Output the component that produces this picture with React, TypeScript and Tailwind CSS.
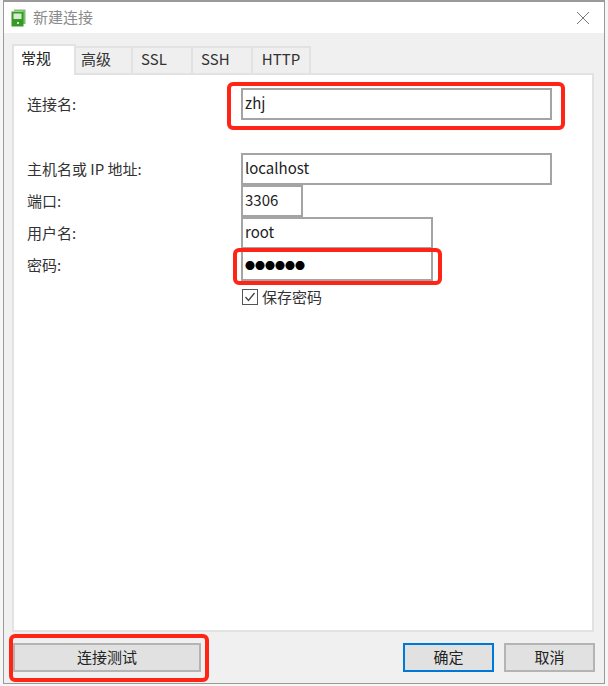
const font = { fontFamily: '"Noto Sans CJK SC", "Noto Sans", sans-serif' };

function Field({ label, value, width, valueClass = "text-[15px] text-[#222] pb-[2px]" }: { label: string; value: string; width: string; valueClass?: string }) {
  return (
    <div className="flex items-center h-[32px]">
      <div className="w-[227px] pl-[13px] text-[15px] text-[#333]">{label}</div>
      <div className={`${width} h-[32px] border-2 border-[#a4a4a4] bg-white flex items-center pl-[2px] ${valueClass}`}>{value}</div>
    </div>
  );
}

function Tab({ label, width, active }: { label: string; width?: string; active?: boolean }) {
  return active ? (
    <div className="w-[64px] h-[31px] -mb-[2px] z-10 bg-white border-2 border-b-0 border-[#e2e2e2] flex items-center justify-center text-[15px] text-[#222] pb-[5px] pr-[16px]">{label}</div>
  ) : (
    <div className={`${width} h-[27px] border-2 border-l-0 border-b-0 border-[#e2e2e2] bg-[#efefef] flex items-center justify-center text-[15px] text-[#333] pb-[2px]`}>{label}</div>
  );
}

export default function App() {
  return (
    <div className="w-[608px] h-[686px] bg-[#f6f6f6] relative overflow-hidden" style={font}>
      <div className="ml-[3px] mr-[3px] h-[684px] bg-[#f0f0f0] border border-[#9a9a9a] border-t-2 flex flex-col">
        <div className="h-[31px] bg-white flex items-center pl-[7px] pr-[14px] shrink-0">
          <svg width="16" height="18" viewBox="0 0 16 18" className="mr-[6px]">
            <path d="M3 0.5 H14.5 V15 H12 V2 H3 Z" fill="#7cc070" />
            <path d="M0.5 2.5 H12.5 V17.5 H0.5 Z" fill="#379a26" />
            <rect x="2.5" y="4.5" width="8" height="5.5" fill="#d5ecd0" />
            <rect x="6" y="13" width="2" height="2" fill="#d5ecd0" />
          </svg>
          <span className="text-[15px] text-[#8b8b8b]">新建连接</span>
          <svg width="14" height="14" viewBox="0 0 14 14" className="ml-auto" stroke="#777" strokeWidth="1" fill="none">
            <path d="M1 1 L13 13 M13 1 L1 13" />
          </svg>
        </div>
        <div className="flex-1 flex flex-col pl-[8px] pr-[10px] pt-[11px]">
          <div className="flex items-end h-[29px] shrink-0">
            <Tab label="常规" active />
            <div className="flex items-end">
              <div className="w-[57px] h-[27px] border-2 border-l-0 border-b-0 border-[#e2e2e2] bg-[#efefef] flex items-center text-[15px] text-[#333] pb-[2px] pl-[5px]">高级</div>
              <div className="w-[60px] h-[27px] border-2 border-l-0 border-b-0 border-[#e2e2e2] bg-[#efefef] flex items-center text-[15px] text-[#333] pb-[2px] pl-[8px]">SSL</div>
              <div className="w-[60px] h-[27px] border-2 border-l-0 border-b-0 border-[#e2e2e2] bg-[#efefef] flex items-center text-[15px] text-[#333] pb-[2px] pl-[8px]">SSH</div>
            </div>
            <Tab label="HTTP" width="w-[58px]" />
          </div>
          <div className="h-[559px] bg-white border-2 border-[#e2e2e2] pt-[13px] flex flex-col">
            <Field label="连接名:" value="zhj" width="w-[311px]" />
            <div className="h-[33px]" />
            <Field label="主机名或 IP 地址:" value="localhost" width="w-[311px]" />
            <Field label="端口:" value="3306" width="w-[62px]" />
            <Field label="用户名:" value="root" width="w-[192px]" />
            <Field label="密码:" value="●●●●●●" width="w-[192px]" valueClass="text-[10px] text-black" />
            <div className="flex items-center pl-[228px] mt-[7px] h-[18px]">
              <span className="w-[16px] h-[16px] border border-[#555] bg-white flex items-center justify-center mr-[4px]">
                <svg width="12" height="12" viewBox="0 0 12 12" fill="none" stroke="#444" strokeWidth="1.3"><path d="M1.5 6 L4.5 9.5 L10.5 2" /></svg>
              </span>
              <span className="text-[15px] text-[#333]">保存密码</span>
            </div>
          </div>
          <div className="flex items-start h-[50px] pt-[11px] -mr-[1px]">
            <button className="ml-[1px] w-[188px] h-[29px] bg-[#e1e1e1] border-2 border-[#b4b4b4] text-[15px] text-[#222]">连接测试</button>
            <button className="ml-auto w-[91px] h-[29px] bg-[#e1e1e1] border-2 border-[#0078d7] text-[15px] text-[#222]">确定</button>
            <button className="ml-[10px] w-[91px] h-[29px] bg-[#e1e1e1] border-2 border-[#b4b4b4] text-[15px] text-[#222]">取消</button>
          </div>
        </div>
      </div>
      <div className="absolute left-[227px] top-[82px] w-[338px] h-[48px] border-4 border-[#ff2416] rounded-[6px]" />
      <div className="absolute left-[233px] top-[248px] w-[209px] h-[37px] border-4 border-[#ff2416] rounded-[6px]" />
      <div className="absolute left-[9px] top-[634px] w-[200px] h-[48px] border-4 border-[#ff2416] rounded-[6px]" />
    </div>
  );
}
